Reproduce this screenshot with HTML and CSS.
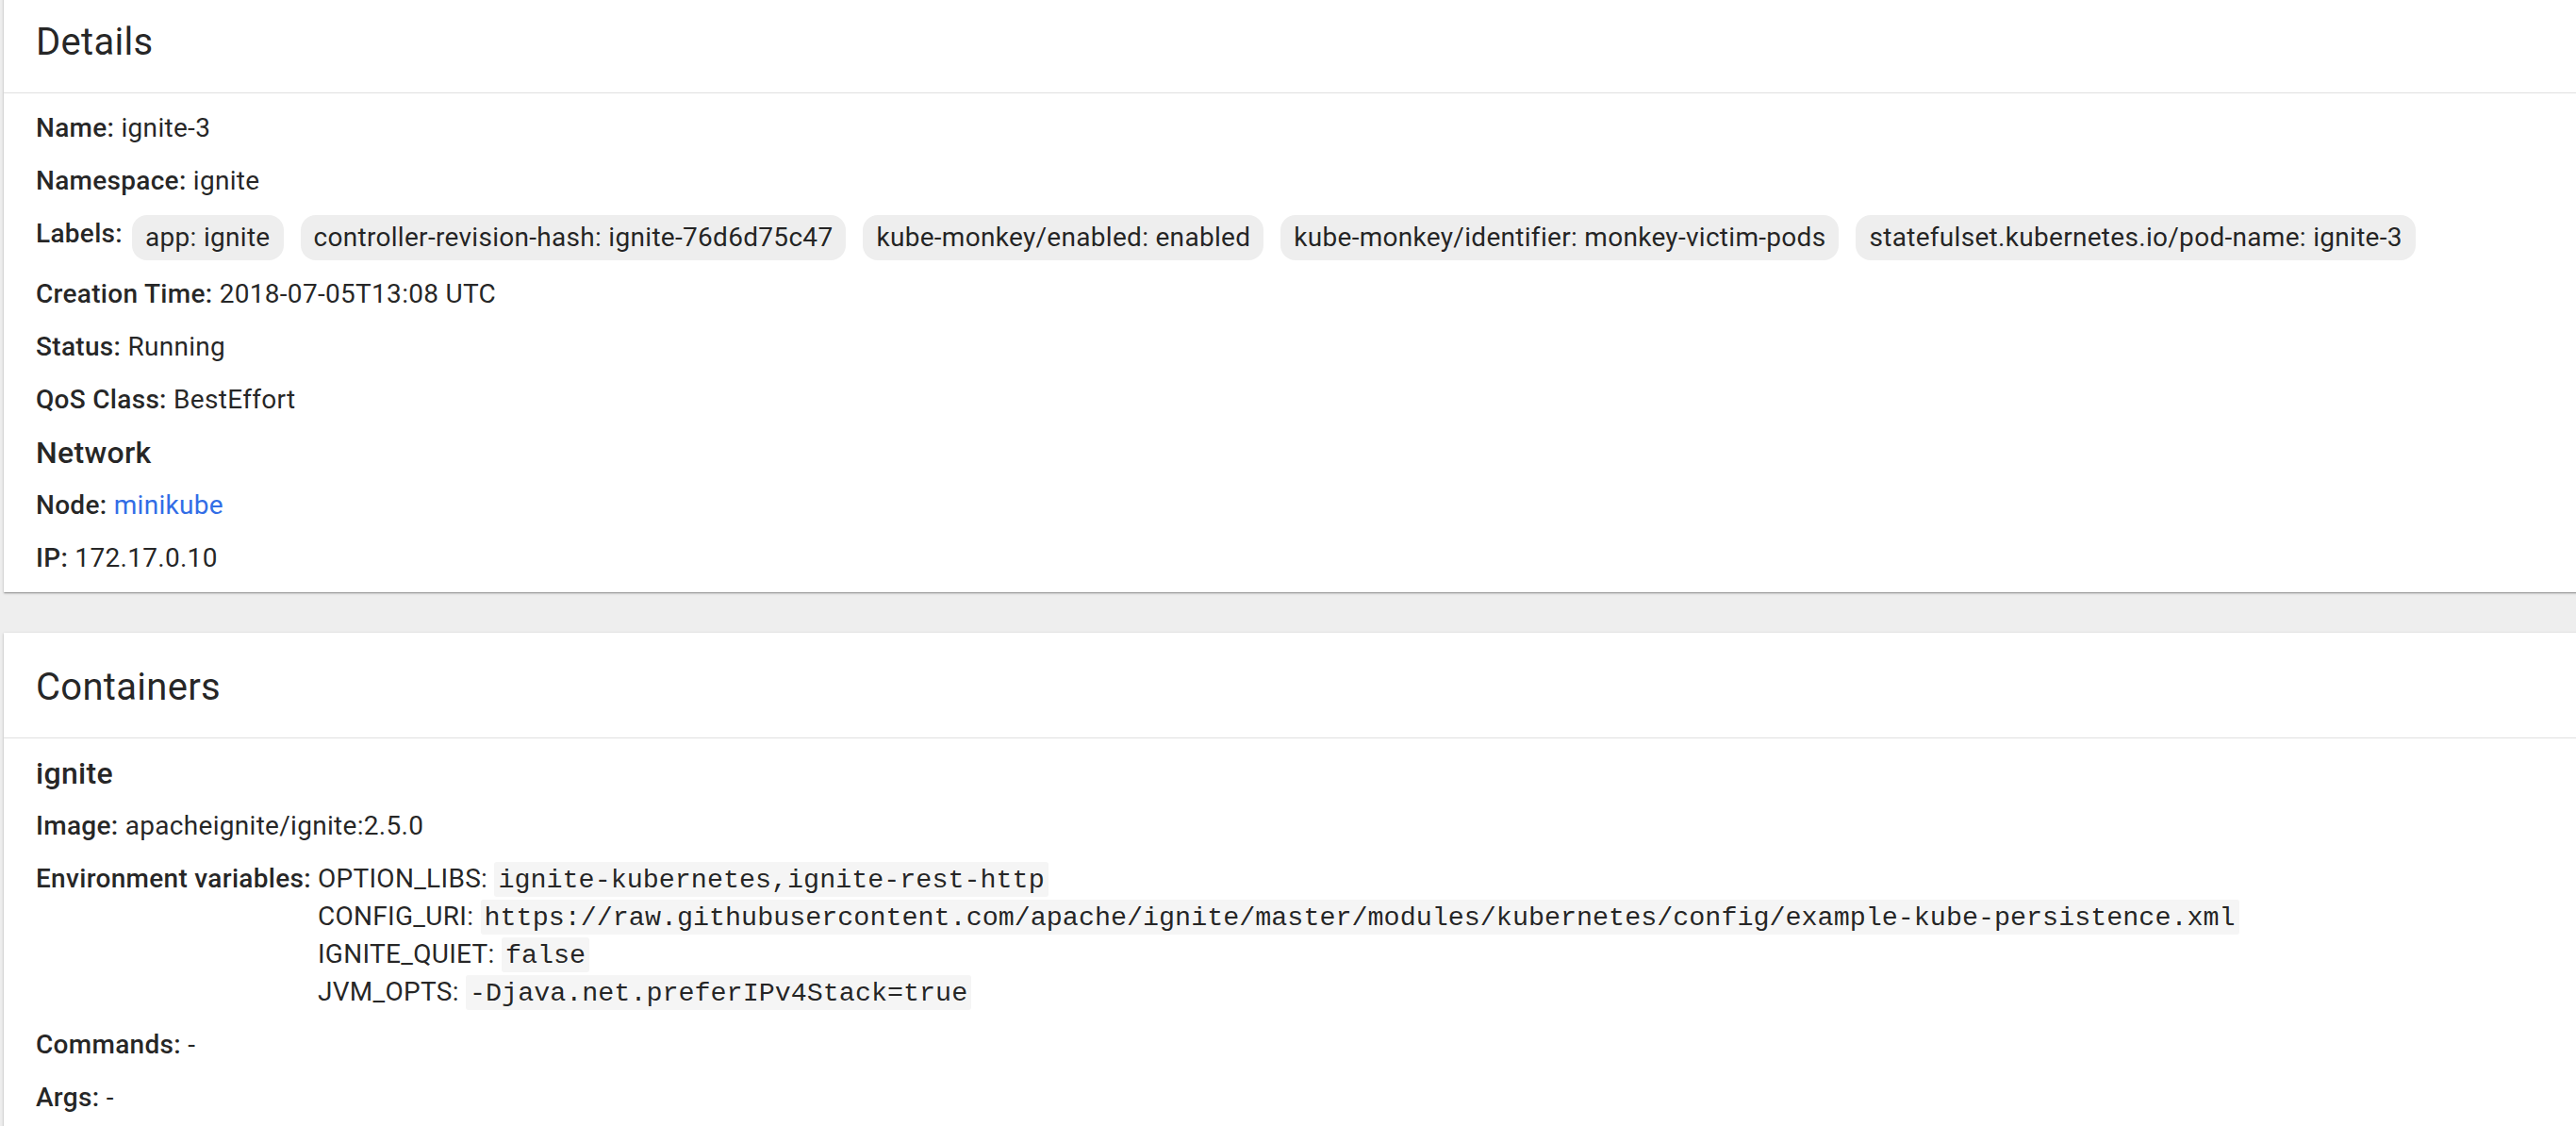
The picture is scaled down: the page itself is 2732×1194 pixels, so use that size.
FILE: index.html
```html
<!DOCTYPE html>
<html>
<head>
<meta charset="utf-8">
<title>Pod ignite-3</title>
<link rel="stylesheet" href="styles.css">
</head>
<body>
<div class="page">
  <section class="card">
    <div class="card-header">Details</div>
    <div class="card-body">
      <div class="row"><span class="key">Name:</span> <span class="val">ignite-3</span></div>
      <div class="row"><span class="key">Namespace:</span> <span class="val">ignite</span></div>
      <div class="row labels">
        <span class="key">Labels:</span>
        <div class="chips">
          <span class="chip">app: ignite</span>
          <span class="chip">controller-revision-hash: ignite-76d6d75c47</span>
          <span class="chip">kube-monkey/enabled: enabled</span>
          <span class="chip">kube-monkey/identifier: monkey-victim-pods</span>
          <span class="chip">statefulset.kubernetes.io/pod-name: ignite-3</span>
        </div>
      </div>
      <div class="row"><span class="key">Creation Time:</span> <span class="val">2018-07-05T13:08 UTC</span></div>
      <div class="row"><span class="key">Status:</span> <span class="val">Running</span></div>
      <div class="row"><span class="key">QoS Class:</span> <span class="val">BestEffort</span></div>
      <div class="row subhead">Network</div>
      <div class="row"><span class="key">Node:</span> <a class="link" href="#">minikube</a></div>
      <div class="row"><span class="key">IP:</span> <span class="val">172.17.0.10</span></div>
    </div>
  </section>

  <section class="card">
    <div class="card-header">Containers</div>
    <div class="card-body">
      <div class="row subhead">ignite</div>
      <div class="row"><span class="key">Image:</span> <span class="val">apacheignite/ignite:2.5.0</span></div>
      <div class="row env">
        <span class="key env-key">Environment variables:</span>
        <div class="env-list">
          <div class="env-line">OPTION_LIBS: <code class="code">ignite-kubernetes,ignite-rest-http</code></div>
          <div class="env-line">CONFIG_URI: <code class="code">https://raw.githubusercontent.com/apache/ignite/master/modules/kubernetes/config/example-kube-persistence.xml</code></div>
          <div class="env-line">IGNITE_QUIET: <code class="code">false</code></div>
          <div class="env-line">JVM_OPTS: <code class="code">-Djava.net.preferIPv4Stack=true</code></div>
        </div>
      </div>
      <div class="row"><span class="key">Commands:</span> <span class="val">-</span></div>
      <div class="row"><span class="key">Args:</span> <span class="val">-</span></div>
    </div>
  </section>
</div>
</body>
</html>
```

FILE: styles.css
```css
html, body {
  margin: 0;
  padding: 0;
  background: #eeeeee;
  overflow: hidden;
}

body {
  font-family: Roboto, "Liberation Sans", sans-serif;
  color: rgba(0, 0, 0, 0.87);
  font-size: 28px;
  letter-spacing: 0.3px;
}

.page {
  margin-top: -13px;
  padding-left: 4px;
  display: flex;
  flex-direction: column;
  gap: 43px;
}

.card {
  background: #ffffff;
  margin-right: -40px;
  box-shadow: 0 1px 3px 0 rgba(0, 0, 0, 0.2), 0 1px 1px 0 rgba(0, 0, 0, 0.14), 0 2px 1px -1px rgba(0, 0, 0, 0.12);
}

.card-header {
  font-size: 40px;
  font-weight: 400;
  line-height: 48px;
  padding: 34px 34px 29px;
  border-bottom: 1px solid #e0e0e0;
}

.card-body {
  padding: 17px 34px 16px;
  display: flex;
  flex-direction: column;
  gap: 16px;
}

.row {
  line-height: 40px;
  white-space: nowrap;
}

.key {
  font-weight: 500;
}

.subhead {
  font-size: 32px;
  font-weight: 500;
}

.link {
  color: #326de6;
  text-decoration: none;
}

.labels {
  display: flex;
  align-items: flex-start;
  gap: 10px;
}

.chips {
  display: flex;
  gap: 18px;
}

.chip {
  display: inline-flex;
  align-items: center;
  height: 48px;
  padding: 0 14px;
  border-radius: 16px;
  background: #eeeeee;
  color: rgba(0, 0, 0, 0.87);
}

.env {
  display: flex;
  align-items: flex-start;
}

.env-key {
  margin-right: 7px;
}

.env-list {
  display: flex;
  flex-direction: column;
}

.env-line {
  line-height: 40px;
}

.code {
  font-family: "Liberation Mono", "DejaVu Sans Mono", monospace;
  font-size: 28.4px;
  line-height: 28px;
  letter-spacing: 0;
  background: #f5f5f5;
  padding: 3px 4px 1px;
  border-radius: 3px;
}
```
